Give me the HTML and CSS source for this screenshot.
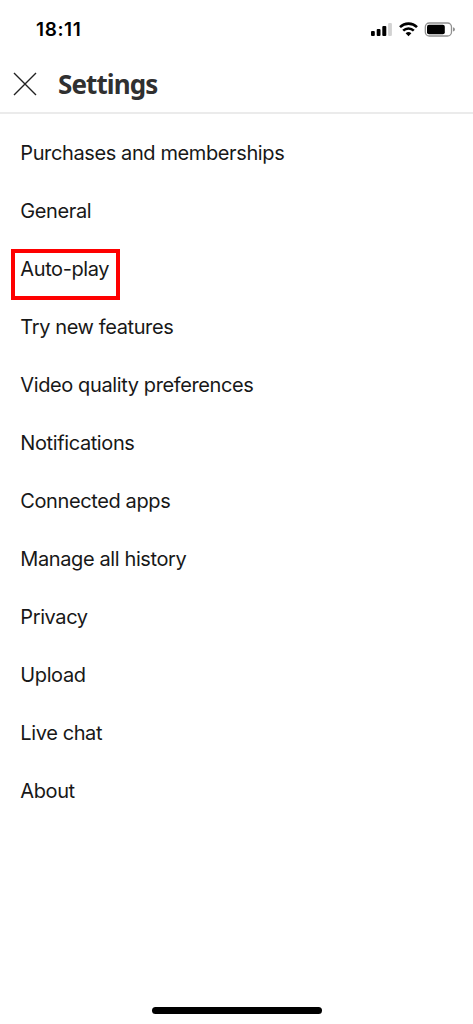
FILE: index.html
```html
<!DOCTYPE html>
<html lang="en">
<head>
<meta charset="utf-8">
<title>Settings</title>
<link rel="stylesheet" href="styles.css">
</head>
<body>
<div class="screen">
  <div class="status">
    <span class="time">18:11</span>
    <svg class="indicators" width="88" height="20" viewBox="0 0 88 20">
      <rect x="1" y="11" width="3.8" height="5" rx="1"/>
      <rect x="6.7" y="9" width="3.8" height="7" rx="1"/>
      <rect x="12.3" y="6" width="4" height="10" rx="1"/>
      <rect x="18.1" y="3" width="3.8" height="13" rx="1" fill="#d2d2d2"/>
      <g fill="none" stroke="#000" stroke-width="2.6">
        <path d="M30 7.1a12.2 12.2 0 0 1 17 0"/>
        <path d="M33.2 10.6a7.6 7.6 0 0 1 10.6 0"/>
      </g>
      <path d="M35.6 13.2a4.3 4.3 0 0 1 5.8 0L38.5 16.2z"/>
      <rect x="55.3" y="3" width="26.2" height="13" rx="4" fill="#fff" stroke="#909090" stroke-width="1.3"/>
      <rect x="57" y="4.7" width="17.8" height="9.6" rx="2"/>
      <path d="M83 7.2q2 .6 2 2.2t-2 2.2z" fill="#909090"/>
    </svg>
  </div>
  <header class="header">
    <svg class="close" width="24" height="24" viewBox="0 0 24 24"><path d="M1 1l22 22M23 1L1 23"/></svg>
    <h1 class="title">Settings</h1>
  </header>
  <ul class="menu">
    <li class="item">Purchases and memberships</li>
    <li class="item">General</li>
    <li class="item marked">Auto-play</li>
    <li class="item">Try new features</li>
    <li class="item">Video quality preferences</li>
    <li class="item">Notifications</li>
    <li class="item">Connected apps</li>
    <li class="item">Manage all history</li>
    <li class="item">Privacy</li>
    <li class="item">Upload</li>
    <li class="item">Live chat</li>
    <li class="item">About</li>
  </ul>
  <div class="home"></div>
</div>
</body>
</html>
```
FILE: styles.css
```css
*, *::after { box-sizing: border-box; margin: 0; padding: 0; }
body { background: #fff; }
.screen {
  display: flex;
  flex-direction: column;
  width: 473px;
  height: 1024px;
  overflow: hidden;
  background: #fff;
  color: #181818;
  font-family: Inter, "Liberation Sans", sans-serif;
}
.status {
  display: flex;
  justify-content: space-between;
  align-items: center;
  height: 58px;
  padding: 0 15.5px 0 36px;
}
.time { font-size: 19px; font-weight: 600; letter-spacing: 0.6px; color: #000; }
.indicators { display: block; margin-top: 2px; }
.header {
  display: flex;
  align-items: center;
  gap: 21px;
  height: 56px;
  padding: 0 13px 3px;
  border-bottom: 2px solid #ebebeb;
}
.close { fill: none; stroke: #222; stroke-width: 1.4; }
.title {
  color: #303030;
  font: 700 26px/34px "Noto Sans", sans-serif;
  letter-spacing: -0.9px;
}
.menu { list-style: none; padding-top: 10px; }
.item {
  position: relative;
  height: 58px;
  padding-left: 20.3px;
  font-size: 20px;
  line-height: 58px;
  letter-spacing: -0.39px;
  white-space: nowrap;
}
.marked::after {
  content: "";
  position: absolute;
  left: 11px;
  top: 9px;
  width: 109px;
  height: 51px;
  border: 4px solid #fe0000;
}
.home {
  width: 170px;
  height: 7px;
  margin: auto auto 10px 152px;
  border-radius: 4px;
  background: #000;
}
```
